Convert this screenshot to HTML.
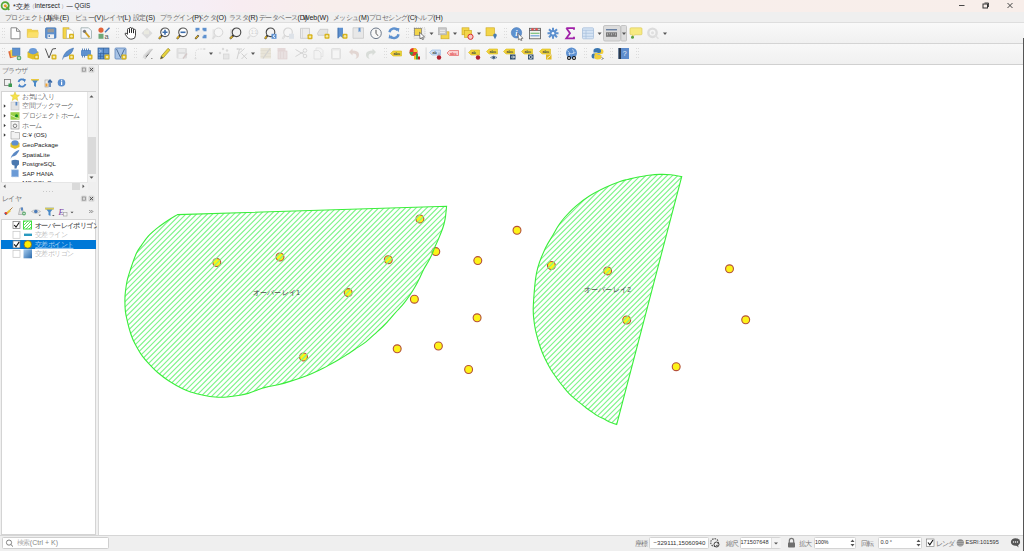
<!DOCTYPE html>
<html><head><meta charset="utf-8">
<style>
*{box-sizing:border-box}
html,body{margin:0;padding:0}
body{width:1024px;height:551px;position:relative;overflow:hidden;background:#f0f0f0;font-family:"Liberation Sans",sans-serif;font-size:8px;color:#222}
.a{position:absolute}
#title{left:0;top:0;width:1024px;height:12px;background:linear-gradient(90deg,#f1f2f7 0px,#f2f2f7 110px,#f6eef5 200px,#f8ecf1 240px,#f8eeec 320px,#f8eeea 1024px)}
#menu{left:0;top:12px;width:1024px;height:10px;background:#efefef}
#tb1{left:0;top:22px;width:1024px;height:22px;background:linear-gradient(#f9f9f9,#f0f0f0);border-top:1px solid #dedede;border-bottom:1px solid #d4d4d4}
#tb2{left:0;top:44px;width:1024px;height:21px;background:linear-gradient(#f8f8f8,#f0f0f0);border-bottom:1px solid #cdcdcd}
#left{left:0;top:65px;width:98px;height:470px;background:#f0f0f0}
#canvas{left:98px;top:64px;width:925px;height:471px;background:#fff;border-left:1px solid #d8d8d8;border-top:1px solid #d0d0d0}
#rbar{left:1023px;top:38px;width:1px;height:513px;background:#555}
#status{left:0;top:535px;width:1023px;height:16px;background:#efefef;border-top:1px solid #d6d6d6}
.txt{white-space:nowrap;line-height:1}
.j{font-size:6.6px;letter-spacing:-0.6px}
span.j{opacity:.65}
tspan.j{fill-opacity:.65}
.mn{top:14px;font-size:7px;color:#222}
</style></head><body>

<div id="title" class="a"></div>
<div id="menu" class="a"></div>
<div id="tb1" class="a"></div>
<div id="tb2" class="a"></div>
<div id="left" class="a"></div>
<div id="canvas" class="a"></div>
<svg class="a" style="left:99px;top:65px" width="924" height="470" viewBox="99 65 924 470">
<defs><pattern id="h" patternUnits="userSpaceOnUse" x="0" y="0" width="16" height="16">
<path d="M-1,6.333 L6.333,-1 M-1,11.667 L11.667,-1 M-1,17 L17,-1 M4.333,17 L17,4.333 M9.667,17 L17,9.667 M15,17 L17,15 M-1,1 L1,-1" stroke="#80f48a" stroke-width="1.15"/></pattern></defs>
<g fill="#fdf318" stroke="#b4503c" stroke-width="1.1"><circle cx="216.8" cy="262.5" r="3.95"/><circle cx="280.0" cy="257.0" r="3.95"/><circle cx="348.2" cy="292.6" r="3.95"/><circle cx="388.3" cy="259.7" r="3.95"/><circle cx="419.9" cy="219.0" r="3.95"/><circle cx="435.8" cy="251.6" r="3.95"/><circle cx="414.4" cy="299.2" r="3.95"/><circle cx="303.5" cy="357.0" r="3.95"/><circle cx="397.2" cy="348.8" r="3.95"/><circle cx="438.4" cy="346.0" r="3.95"/><circle cx="468.6" cy="369.5" r="3.95"/><circle cx="477.8" cy="260.6" r="3.95"/><circle cx="477.1" cy="317.8" r="3.95"/><circle cx="517.0" cy="230.3" r="3.95"/><circle cx="551.4" cy="265.5" r="3.95"/><circle cx="607.6" cy="270.9" r="3.95"/><circle cx="626.7" cy="320.0" r="3.95"/><circle cx="676.2" cy="366.7" r="3.95"/><circle cx="729.5" cy="268.8" r="3.95"/><circle cx="745.7" cy="319.8" r="3.95"/></g>
<g fill="url(#h)" stroke="#3aee3a" stroke-width="1.1"><path d="M177.5,214.6 L446.6,206.3 C446.4,208.0 445.9,213.8 445.5,216.7 C445.1,219.6 444.6,221.7 444.0,224.0 C443.4,226.3 442.9,227.9 441.9,230.5 C440.9,233.1 439.4,236.8 438.2,239.6 C437.0,242.4 435.9,244.8 434.8,247.3 C433.8,249.8 433.0,252.1 431.9,254.5 C430.8,256.9 429.5,259.4 428.2,261.8 C426.9,264.2 425.5,266.0 423.9,269.0 C422.3,272.0 420.3,276.8 418.8,279.8 C417.3,282.9 416.3,284.7 414.8,287.3 C413.3,289.9 411.6,292.6 409.8,295.2 C408.0,297.8 406.1,300.6 404.0,303.2 C401.9,305.8 399.8,307.8 397.4,310.5 C395.0,313.2 391.6,317.1 389.4,319.6 C387.1,322.1 386.0,323.4 383.9,325.5 C381.8,327.6 379.8,329.4 376.8,332.1 C373.8,334.8 369.5,339.0 365.9,341.9 C362.3,344.8 358.4,346.9 355.0,349.2 C351.6,351.5 348.2,353.8 345.4,355.6 C342.6,357.4 340.5,358.6 338.1,360.0 C335.7,361.4 333.3,362.7 330.9,364.0 C328.5,365.3 326.8,366.4 323.6,368.0 C320.5,369.6 315.6,371.9 312.0,373.5 C308.4,375.1 305.5,376.2 301.8,377.5 C298.1,378.8 293.9,380.2 290.0,381.4 C286.1,382.6 281.9,383.8 278.1,384.7 C274.3,385.6 269.7,386.3 267.2,386.9 C264.7,387.4 263.6,387.8 262.9,388.0 C261.8,388.4 258.8,389.5 256.3,390.4 C253.9,391.3 250.9,392.6 248.2,393.4 C245.5,394.2 243.6,394.7 240.0,395.3 C236.4,395.9 231.1,396.7 226.9,397.0 C222.8,397.3 219.0,397.3 215.1,397.0 C211.2,396.7 207.3,396.0 203.4,395.2 C199.5,394.4 195.1,393.4 191.7,392.3 C188.2,391.2 186.5,390.7 182.7,388.8 C178.8,386.9 172.8,383.4 168.6,380.7 C164.4,378.0 161.0,375.3 157.7,372.5 C154.4,369.7 151.6,366.5 149.0,363.8 C146.4,361.1 144.4,358.8 142.4,356.1 C140.4,353.4 138.6,350.3 137.0,347.4 C135.4,344.5 133.8,341.6 132.6,338.7 C131.4,335.8 130.5,333.1 129.6,330.0 C128.7,326.9 127.8,323.2 127.1,320.1 C126.4,317.0 125.8,314.7 125.4,311.4 C125.0,308.1 124.9,303.8 124.9,300.5 C124.9,297.2 125.0,295.1 125.4,291.8 C125.8,288.5 126.3,284.5 127.1,280.9 C127.9,277.3 128.8,274.6 130.3,270.0 C131.8,265.4 134.4,257.8 136.3,253.6 C138.2,249.4 139.8,247.8 141.8,244.9 C143.8,242.0 145.6,239.0 148.3,236.1 C151.0,233.2 154.7,230.1 158.1,227.4 C161.5,224.7 165.8,221.9 169.0,219.8 C172.2,217.7 176.1,215.5 177.5,214.6 Z"/><path d="M681.7,176.6 C679.9,176.3 674.4,175.2 670.8,174.8 C667.2,174.4 663.6,174.3 660.0,174.4 C656.4,174.5 652.6,174.8 649.0,175.2 C645.4,175.6 641.8,176.3 638.2,177.0 C634.6,177.7 630.3,178.8 627.3,179.5 C624.3,180.2 623.7,180.2 620.0,181.5 C616.3,182.8 610.5,185.1 605.3,187.6 C600.1,190.1 593.9,193.2 589.0,196.3 C584.1,199.4 579.9,202.7 575.9,206.1 C571.9,209.5 567.9,213.8 565.0,217.0 C562.1,220.2 560.5,222.5 558.5,225.5 C556.5,228.5 555.0,231.6 553.0,235.0 C551.0,238.4 548.4,242.3 546.5,245.9 C544.6,249.5 543.1,253.2 541.6,256.8 C540.1,260.4 538.8,264.1 537.8,267.7 C536.8,271.3 536.2,274.1 535.6,278.6 C535.0,283.2 534.4,289.8 534.0,295.0 C533.6,300.2 533.2,305.8 533.2,310.0 C533.2,314.2 533.5,316.8 533.9,320.0 C534.2,323.2 534.7,326.1 535.3,329.1 C535.9,332.1 536.7,335.1 537.5,338.1 C538.3,341.1 539.2,344.2 540.3,347.2 C541.4,350.2 542.7,353.6 543.9,356.3 C545.1,359.0 546.3,361.3 547.5,363.6 C548.7,365.9 549.6,367.6 551.1,370.0 C552.6,372.4 554.5,375.0 556.4,377.7 C558.3,380.4 560.6,383.4 562.7,386.0 C564.8,388.6 567.0,391.4 569.1,393.6 C571.2,395.8 573.4,397.6 575.4,399.3 C577.4,401.0 579.1,402.2 580.9,403.6 C582.7,405.1 584.5,406.6 586.3,408.0 C588.1,409.4 590.0,410.5 591.8,411.8 C593.6,413.1 595.2,414.4 597.2,415.6 C599.2,416.8 601.7,417.8 603.7,418.8 C605.7,419.8 606.8,420.8 609.0,421.7 C611.2,422.6 615.4,424.0 616.7,424.5 Z"/></g>
<g font-size="6.6" fill="#444" font-family="Liberation Sans" letter-spacing="0.3"><text x="252.5" y="295">オーバーレイ1</text><text x="583.5" y="291.5">オーバーレイ2</text></g>
</svg>
<div id="status" class="a"></div>
<svg class="a" style="left:0;top:23px" width="1024" height="42" viewBox="0 23 1024 42">
<rect x="603.5" y="25.5" width="17" height="15.5" rx="1.5" fill="#dcdcdc" stroke="#c4c4c4"/><rect x="621" y="25.5" width="5.5" height="15.5" rx="1" fill="#dcdcdc" stroke="#c4c4c4"/>
<g fill="#dcdcdc"><rect x="2" y="28" width="1" height="1"/><rect x="2" y="31" width="1" height="1"/><rect x="2" y="34" width="1" height="1"/><rect x="2" y="37" width="1" height="1"/><rect x="4" y="28" width="1" height="1"/><rect x="4" y="31" width="1" height="1"/><rect x="4" y="34" width="1" height="1"/><rect x="4" y="37" width="1" height="1"/></g>
<g transform="translate(10.5,27.3)"><path d="M0.5,0.5 H6 L9.5,4 V11.5 H0.5Z" fill="#fff" stroke="#8a8a8a"/><path d="M6,0.5 V4 H9.5" fill="none" stroke="#8a8a8a"/></g>
<g transform="translate(26.8,27.3)"><path d="M0.5,2 H4.5 L5.5,3 H11 V10 H0.5Z" fill="#f3d54a" stroke="#e0b83a" stroke-width=".6"/><path d="M0.5,10 L1.8,5 H12 L11,10Z" fill="#fbe06a"/></g>
<g transform="translate(45,27.3)"><rect x="0.5" y="0.5" width="10.5" height="10.5" rx="1" fill="#5e91cf" stroke="#3b6cab" stroke-width=".6"/><rect x="2.5" y="1.5" width="6.5" height="3.5" fill="#9a9a9a"/><rect x="2.5" y="7" width="6.5" height="4" fill="#f2f2f2"/><rect x="3.5" y="8" width="1.5" height="1.5" fill="#3b6cab"/></g>
<g transform="translate(62.5,27.3)"><rect x="0.5" y="0.5" width="6" height="10.5" fill="#f3d54a" stroke="#c9a51c" stroke-width=".6"/><path d="M4,2 H8.5 L11,4.5 V11 H4Z" fill="#fff" stroke="#aaa" stroke-width=".6"/><rect x="6.5" y="6.5" width="5" height="5" rx="1" fill="#d8b41e"/><circle cx="9.0" cy="9.0" r="1.3" fill="#f6eaa0"/></g>
<g transform="translate(80.5,27.3)"><path d="M0.5,0.5 H8 L11,3.5 V11 H0.5Z" fill="#f4f6fb" stroke="#9aa" stroke-width=".8"/><path d="M4,4 L9,10" stroke="#d0a020" stroke-width="1.8"/><circle cx="4" cy="4" r="1.6" fill="#777"/></g>
<g transform="translate(98,27.3)"><circle cx="3" cy="2.8" r="2.6" fill="#e2643a"/><rect x="0.5" y="6.5" width="5" height="5" fill="#6ea87a"/><path d="M7,5 L11.5,0.5" stroke="#4a78b8" stroke-width="1.4"/><text x="6.6" y="11.8" font-size="7.5" fill="#555" font-family="Liberation Sans">a</text></g>
<g fill="#dcdcdc"><rect x="116" y="28" width="1" height="1"/><rect x="116" y="31" width="1" height="1"/><rect x="116" y="34" width="1" height="1"/><rect x="116" y="37" width="1" height="1"/><rect x="118" y="28" width="1" height="1"/><rect x="118" y="31" width="1" height="1"/><rect x="118" y="34" width="1" height="1"/><rect x="118" y="37" width="1" height="1"/></g>
<g transform="translate(124.5,27.3)"><path d="M3,7 V2.2 Q3,1.2 4,1.2 Q5,1.2 5,2.2 V5.5 V1.2 Q5,0.2 6,0.2 Q7,0.2 7,1.2 V5.5 V1.8 Q7,0.8 8,0.8 Q9,0.8 9,1.8 V5.8 V3 Q9,2 10,2 Q11,2 11,3 V8 Q11,11.8 7.5,11.8 H6 Q4,11.8 2.5,9.5 L0.6,6.8 Q0.4,5.6 1.6,5.8 Z" fill="#fff" stroke="#222" stroke-width=".85" stroke-linejoin="round"/></g>
<g transform="translate(141,27.3)"><path d="M6,0.5 L11.5,6 L6,11.5 L0.5,6Z" fill="#dcdcdc"/><rect x="3" y="3" width="5" height="4" fill="#e9e9e0"/></g>
<g transform="translate(158,27.3)"><circle cx="7" cy="5" r="4.3" fill="#fff" stroke="#555" stroke-width="1.1"/><path d="M3.99,8.01 L1,11.5" stroke="#333" stroke-width="2"/><path d="M2.99,9.01 L1.2,11.2" stroke="#e0b020" stroke-width="1.6"/><path d="M4.5,5 H9.5 M7,2.5 V7.5" stroke="#3b6cab" stroke-width="1.6"/></g>
<g transform="translate(176,27.3)"><circle cx="7" cy="5" r="4.3" fill="#fff" stroke="#555" stroke-width="1.1"/><path d="M3.99,8.01 L1,11.5" stroke="#333" stroke-width="2"/><path d="M2.99,9.01 L1.2,11.2" stroke="#e0b020" stroke-width="1.6"/><path d="M4.5,5 H9.5" stroke="#3b6cab" stroke-width="1.6"/></g>
<g transform="translate(194.5,27.3)"><rect x="1" y="0.5" width="4" height="3.5" fill="#5e91cf"/><rect x="8" y="0.5" width="4" height="3.5" fill="#5e91cf"/><rect x="8" y="7.5" width="4" height="3.5" fill="#5e91cf"/><rect x="3" y="3" width="6" height="6" fill="#eee"/><path d="M4,8 L0.8,11.5" stroke="#333" stroke-width="1.8"/><path d="M3.5,8.5 L1,11.2" stroke="#e0b020" stroke-width="1.2"/></g>
<g transform="translate(211.5,27.3)"><rect x="1" y="2" width="4" height="8" fill="#e6e6e6"/><circle cx="7" cy="5" r="4.3" fill="#f6f6f6" stroke="#d6d6d6"/><path d="M3.5,8.5 L1,11.5" stroke="#dcdcdc" stroke-width="1.8"/></g>
<g transform="translate(229,27.3)"><rect x="1" y="2" width="4" height="8" fill="#e0e0e0"/><circle cx="7.5" cy="5" r="4.3" fill="#f2f2f2" stroke="#444" stroke-width="1.1"/><path d="M4.49,8.01 L1,11.5" stroke="#333" stroke-width="2"/><path d="M3.49,9.01 L1.2,11.2" stroke="#e0b020" stroke-width="1.6"/></g>
<g transform="translate(246.5,27.3)"><circle cx="7" cy="5" r="4.3" fill="#f7f7f7" stroke="#dadada"/><text x="4.5" y="7" font-size="4.5" fill="#ccc" font-family="Liberation Sans">1:1</text><path d="M3.5,8.5 L1,11.5" stroke="#dcdcdc" stroke-width="1.8"/></g>
<g transform="translate(264,27.3)"><circle cx="6.5" cy="5" r="4.3" fill="#f3f3f3" stroke="#444" stroke-width="1.1"/><path d="M3.49,8.01 L1,11.5" stroke="#333" stroke-width="2"/><path d="M2.49,9.01 L1.2,11.2" stroke="#e0b020" stroke-width="1.6"/><rect x="7.5" y="6.5" width="5" height="5" fill="#5e91cf"/><path d="M11,7.5 L9,9 L11,10.5" stroke="#fff" fill="none" stroke-width=".9"/></g>
<g transform="translate(281.5,27.3)"><circle cx="6.5" cy="5" r="4.3" fill="#f6f6f6" stroke="#d4d4d4" stroke-width="1.1"/><path d="M3.49,8.01 L1,11.5" stroke="#d8d8d8" stroke-width="2"/><path d="M2.49,9.01 L1.2,11.2" stroke="#e4e4e4" stroke-width="1.6"/><rect x="7.5" y="6.5" width="5" height="5" fill="#dde2e8"/></g>
<g transform="translate(300,27.3)"><path d="M0.5,1 H9.5 V11 H0.5Z" fill="#ececec" stroke="#c6c6c6" stroke-width=".8"/><path d="M2.5,1 V11" stroke="#d0d0d0" stroke-width=".6"/><rect x="7.5" y="7" width="5" height="5" rx="1" fill="#d8b41e"/><circle cx="10.0" cy="9.5" r="1.3" fill="#f6eaa0"/></g>
<g transform="translate(317,27.3)"><path d="M0.5,6 L3,2 H11 L10,8 H1Z" fill="#e3e3e3" stroke="#c4c4c4" stroke-width=".7"/><rect x="7.5" y="6.5" width="5" height="5" rx="1" fill="#d8b41e"/><circle cx="10.0" cy="9.0" r="1.3" fill="#f6eaa0"/></g>
<g transform="translate(337,27.3)"><path d="M1,0.5 H6 V11 L3.5,9 L1,11Z" fill="#5e91cf"/><path d="M1,0.5 V11" stroke="#3b6cab"/><rect x="5.5" y="6.5" width="5" height="5" rx="1" fill="#d8b41e"/><circle cx="8.0" cy="9.0" r="1.3" fill="#f6eaa0"/></g>
<g transform="translate(352.5,27.3)"><path d="M0.5,0.5 H11 V11 H0.5Z" fill="#e8e8e8" stroke="#c4c4c4" stroke-width=".7"/><path d="M6,0.5 H8 V5 L7,4 L6,5Z" fill="#5e91cf"/></g>
<g transform="translate(369.5,27.3)"><circle cx="6.5" cy="6" r="5.3" fill="#f8f8f8" stroke="#6e7a8a" stroke-width="1"/><path d="M6.5,2.5 V6 L8.5,8.5" stroke="#555" fill="none" stroke-width="1"/></g>
<g transform="translate(387.5,27.3)"><path d="M2,5 A4.5,4.5 0 0 1 10,3" stroke="#5e91cf" stroke-width="2.4" fill="none"/><path d="M8,0.5 L12,1 L11,5Z" fill="#5e91cf"/><path d="M11,7 A4.5,4.5 0 0 1 3,9" stroke="#5e91cf" stroke-width="2.4" fill="none"/><path d="M5,11.5 L1,11 L2,7Z" fill="#5e91cf"/></g>
<g fill="#dcdcdc"><rect x="406" y="28" width="1" height="1"/><rect x="406" y="31" width="1" height="1"/><rect x="406" y="34" width="1" height="1"/><rect x="406" y="37" width="1" height="1"/><rect x="408" y="28" width="1" height="1"/><rect x="408" y="31" width="1" height="1"/><rect x="408" y="34" width="1" height="1"/><rect x="408" y="37" width="1" height="1"/></g>
<g transform="translate(413.5,27.3)"><rect x="0.5" y="0.5" width="11" height="10.5" fill="#eee" stroke="#bbb" stroke-dasharray="1,1" stroke-width=".7"/><rect x="1" y="1" width="7" height="7" fill="#f3d54a" stroke="#777" stroke-width=".7"/><path d="M6,5 L11,9.5 L9,10 L10,12 L8.5,12 L8,10.5 L6.5,11.5Z" fill="#fff" stroke="#333" stroke-width=".6"/></g>
<path d="M429.5,32.5 L433.5,32.5 L431.5,35.0Z" fill="#555"/>
<g transform="translate(438,27.3)"><rect x="3" y="4.5" width="8" height="7" fill="#f3d54a" stroke="#c9a51c" stroke-width=".6"/><rect x="0.5" y="0.5" width="8" height="7" fill="#c8c8c8" stroke="#aaa" stroke-width=".6"/><path d="M2,3 H7 M2,5 H7" stroke="#f4f4f4" stroke-width=".9"/></g>
<path d="M453,32.5 L457,32.5 L455,35.0Z" fill="#555"/>
<g transform="translate(461.5,27.3)"><rect x="0.5" y="0.5" width="7" height="7" fill="#f3d54a" stroke="#c9a51c" stroke-width=".6"/><rect x="3" y="3" width="7" height="7" fill="#f3d54a" stroke="#c9a51c" stroke-width=".6"/><circle cx="9" cy="9.5" r="2.6" fill="#f7c8c8" stroke="#d83030" stroke-width="1"/></g>
<path d="M477,32.5 L481,32.5 L479,35.0Z" fill="#555"/>
<g transform="translate(485.5,27.3)"><rect x="0.5" y="0.5" width="8.5" height="8" fill="#f3d54a" stroke="#c9a51c" stroke-width=".6"/><path d="M11,9 A1.8,1.8 0 1 0 8,9 L9.5,12Z" fill="#4a7bb0"/></g>
<g fill="#dcdcdc"><rect x="504" y="28" width="1" height="1"/><rect x="504" y="31" width="1" height="1"/><rect x="504" y="34" width="1" height="1"/><rect x="504" y="37" width="1" height="1"/><rect x="506" y="28" width="1" height="1"/><rect x="506" y="31" width="1" height="1"/><rect x="506" y="34" width="1" height="1"/><rect x="506" y="37" width="1" height="1"/></g>
<g transform="translate(511,27.3)"><circle cx="5.5" cy="5.5" r="5.2" fill="#5e91cf" stroke="#4a7ab8" stroke-width=".6"/><text x="4.2" y="9" font-size="8" font-style="italic" font-weight="bold" fill="#fff" font-family="Liberation Serif">i</text><path d="M7,6 L12,11 L10,11.2 L11,13 L9.6,13 L9,11.5 L7.5,12.5Z" fill="#fff" stroke="#444" stroke-width=".6"/></g>
<g transform="translate(529,27.3)"><rect x="0.5" y="1" width="11" height="10.5" fill="#f2f2f2" stroke="#555" stroke-width=".8"/><path d="M0.5,3 H11.5" stroke="#555"/><circle cx="3.5" cy="2" r="1.2" fill="#e05050"/><circle cx="7.5" cy="2" r="1.2" fill="#e05050"/><path d="M1.5,6 H10.5" stroke="#7ac07a" stroke-width="1.2"/><path d="M1.5,8.5 H10.5" stroke="#6fa0d8" stroke-width="1.2"/></g>
<g transform="translate(547,27.3)"><g stroke="#5e91cf" stroke-width="2"><path d="M6,0.5 V11.5 M0.5,6 H11.5 M2,2 L10,10 M10,2 L2,10"/></g><circle cx="6" cy="6" r="3.2" fill="#5e91cf"/><circle cx="6" cy="6" r="1.3" fill="#fff"/></g>
<g transform="translate(565.5,27.3)"><path d="M0.8,0.8 H8.5 V2.5 M0.8,0.8 L4.5,6 L0.8,11 H8.5 V9.5" fill="none" stroke="#a020a8" stroke-width="1.8"/></g>
<g transform="translate(582,27.3)"><rect x="0.5" y="0.5" width="11" height="11" rx="1" fill="#d6e4f4" stroke="#a8c0dc" stroke-width=".8"/><path d="M0.5,3 H11.5 M0.5,6 H11.5 M0.5,9 H11.5 M4,3 V11.5" stroke="#a8c0dc" stroke-width=".7"/></g>
<path d="M597.6,32.5 L601.6,32.5 L599.6,35.0Z" fill="#555"/>
<g transform="translate(605,27.3)"><path d="M1,2.5 H12" stroke="#3a5a8a" stroke-width="1"/><rect x="1" y="5" width="11" height="4.5" fill="#777"/><path d="M2.5,6 V8 M4.5,6 V7 M6.5,6 V8 M8.5,6 V7 M10.5,6 V8" stroke="#ddd" stroke-width=".6"/></g>
<path d="M622,32.5 L626,32.5 L624,35.0Z" fill="#555"/>
<g transform="translate(630,27.3)"><path d="M1,0.5 H11 Q12,0.5 12,1.5 V6.5 Q12,7.5 11,7.5 H4.5 L2.5,10 V7.5 H1 Q0,7.5 0,6.5 V1.5 Q0,0.5 1,0.5Z" fill="#f7ea82" stroke="#d9c650" stroke-width=".6"/><circle cx="2.5" cy="10" r="1.5" fill="#5aa040"/></g>
<g transform="translate(647,27.3)"><circle cx="5.5" cy="5.5" r="4.2" fill="none" stroke="#dcdcdc" stroke-width="2.4"/><circle cx="5.5" cy="5.5" r="1.5" fill="#e0e0e0"/><path d="M8,8 L11.5,11.5" stroke="#e0e0e0" stroke-width="1.6"/></g>
<path d="M663,32.5 L667,32.5 L665,35.0Z" fill="#555"/>
<g fill="#dcdcdc"><rect x="2" y="48" width="1" height="1"/><rect x="2" y="51" width="1" height="1"/><rect x="2" y="54" width="1" height="1"/><rect x="2" y="57" width="1" height="1"/><rect x="4" y="48" width="1" height="1"/><rect x="4" y="51" width="1" height="1"/><rect x="4" y="54" width="1" height="1"/><rect x="4" y="57" width="1" height="1"/></g>
<g transform="translate(9,47.5)"><rect x="0" y="3" width="7" height="7" fill="#e06a3a" transform="rotate(-15 3.5 6.5)"/><rect x="1.5" y="2" width="7" height="7" fill="#f3d54a" transform="rotate(-8 5 5.5)"/><rect x="3.5" y="0.5" width="7.5" height="7.5" fill="#5e91cf" stroke="#4a7ab0" stroke-width=".5"/><circle cx="10" cy="10.5" r="2.3" fill="#3d9a55"/><path d="M10,9 V12 M8.5,10.5 H11.5" stroke="#fff" stroke-width=".8"/></g>
<g transform="translate(27,47.5)"><path d="M0.5,4.5 L6,2 L11.5,4.5 V10 L6,12 L0.5,10Z" fill="#e3c227"/><path d="M0.5,4.5 L6,2 L11.5,4.5 L6,7Z" fill="#5e91cf"/><ellipse cx="6" cy="3.5" rx="4" ry="3" fill="#6b9bd6"/><rect x="7" y="7" width="5" height="5" rx="1" fill="#d8b41e"/><circle cx="9.5" cy="9.5" r="1.3" fill="#f6eaa0"/></g>
<g transform="translate(44.5,47.5)"><path d="M0.8,1 L4.5,10.5 L8,1.5 L11.5,1" fill="none" stroke="#555" stroke-width="1"/><rect x="7" y="7" width="5" height="5" rx="1" fill="#d8b41e"/><circle cx="9.5" cy="9.5" r="1.3" fill="#f6eaa0"/></g>
<g transform="translate(62,47.5)"><path d="M0.5,12 Q2,3 11.5,0.5 Q10,8 2,9.5" fill="#5e91cf" stroke="#3b6cab" stroke-width=".6"/><rect x="7" y="7" width="5" height="5" rx="1" fill="#d8b41e"/><circle cx="9.5" cy="9.5" r="1.3" fill="#f6eaa0"/></g>
<g transform="translate(80.5,47.5)"><rect x="0.5" y="2.5" width="10" height="6" rx="1" fill="#5e91cf"/><path d="M2,1 V3 M4,1 V3 M6,1 V3 M8,1 V3 M2,8 V10 M4,8 V10" stroke="#3b6cab" stroke-width=".8"/><rect x="7" y="7" width="5" height="5" rx="1" fill="#d8b41e"/><circle cx="9.5" cy="9.5" r="1.3" fill="#f6eaa0"/></g>
<g transform="translate(97.5,47.5)"><rect x="0.5" y="0.5" width="11" height="11" fill="#5e91cf" stroke="#2f5d96" stroke-width=".7"/><path d="M0.5,6 H11.5 M6,0.5 V11.5 M3,6 V11.5 M0.5,8.8 H6" stroke="#2f5d96" stroke-width=".6"/><path d="M1.5,2 L4,3.5 L1.5,5" stroke="#c8dcf2" fill="none" stroke-width=".6"/><rect x="7" y="7" width="5" height="5" rx="1" fill="#d8b41e"/><circle cx="9.5" cy="9.5" r="1.3" fill="#f6eaa0"/></g>
<g transform="translate(114.5,47.5)"><rect x="0.5" y="0.5" width="11" height="11" rx="1" fill="#a9c4e6" stroke="#5e86bb" stroke-width=".8"/><path d="M2,1.5 L6,10 L10,1.5" stroke="#4f6f98" fill="none" stroke-width="1"/><rect x="7" y="7" width="5" height="5" rx="1" fill="#d8b41e"/><circle cx="9.5" cy="9.5" r="1.3" fill="#f6eaa0"/></g>
<g fill="#dcdcdc"><rect x="134" y="48" width="1" height="1"/><rect x="134" y="51" width="1" height="1"/><rect x="134" y="54" width="1" height="1"/><rect x="134" y="57" width="1" height="1"/><rect x="136" y="48" width="1" height="1"/><rect x="136" y="51" width="1" height="1"/><rect x="136" y="54" width="1" height="1"/><rect x="136" y="57" width="1" height="1"/></g>
<g transform="translate(141.5,47.5)"><path d="M1,11 L2,7.5 L8.5,1 L10.5,3 L4,9.5Z" fill="#dcdcdc"/><path d="M3.5,11.5 L4.5,8 L11,1.5" stroke="#cfcfcf" stroke-width="1.5"/><rect x="9.5" y="10.5" width="1.5" height="1" fill="#999"/></g>
<g transform="translate(159.5,47.5)"><path d="M1,11.5 L1.8,8.5 L8.5,0.8 L10.6,2.6 L3.8,10.3Z" fill="#e6d23a" stroke="#8a7a20" stroke-width=".6"/><path d="M1,11.5 L1.8,8.5 L3.8,10.3Z" fill="#555"/></g>
<g transform="translate(176,47.5)"><rect x="0.5" y="0.5" width="10.5" height="10.5" rx="1" fill="#dedede"/><rect x="2.5" y="1.5" width="6.5" height="3" fill="#eaeaea"/><rect x="2.5" y="6.5" width="6" height="4" fill="#f0f0f0"/><path d="M7,11 L11,6" stroke="#d4c8c8" stroke-width="1.4"/></g>
<g transform="translate(194,47.5)"><path d="M1.5,11 V5 Q2,1.5 6,1.5 H10.5" fill="none" stroke="#d8d8d8" stroke-width=".9" stroke-dasharray="1.5,1"/><circle cx="10.5" cy="1.5" r="1" fill="#ddd"/><circle cx="1.5" cy="11" r="1" fill="#ddd"/></g>
<path d="M209,52.5 L213,52.5 L211,55.0Z" fill="#555"/>
<g transform="translate(218,47.5)"><circle cx="2" cy="5.5" r="1.2" fill="#dadada"/><circle cx="5" cy="1.5" r="1.2" fill="#dadada"/><circle cx="9" cy="3" r="1.2" fill="#dadada"/><rect x="5.5" y="6.5" width="5.5" height="5" fill="#e6e6e6" stroke="#d0d0d0" stroke-width=".6"/></g>
<g transform="translate(236,47.5)"><path d="M1,11.5 L3.5,1.5 M1.5,1.5 H6 M3,6 L8.5,1 M5.5,6 L11,11.5 M11,6 L5.5,11.5" stroke="#d0d0d0" stroke-width="1" fill="none"/><circle cx="1.5" cy="1.5" r="1" fill="#d8d8d8"/></g>
<path d="M251,52.5 L255,52.5 L253,55.0Z" fill="#555"/>
<g transform="translate(260,47.5)"><rect x="0.5" y="0.5" width="10.5" height="10.5" fill="#e8e4d8"/><path d="M3,11 L10,1" stroke="#d0d0d0" stroke-width="1.2"/><path d="M0.5,3 H11 M0.5,6 H11 M0.5,9 H11" stroke="#ddd8cc" stroke-width=".5"/></g>
<g transform="translate(276.5,47.5)"><rect x="1" y="0.5" width="8" height="3" fill="#e4d8d8"/><rect x="1.5" y="3.5" width="9" height="8" fill="#e8e0e0" stroke="#dccccc" stroke-width=".6"/><path d="M4,4 V11 M7,4 V11" stroke="#dcd0d0" stroke-width=".5"/></g>
<g transform="translate(295,47.5)"><path d="M0.5,2 L9,7 M0.5,9 L9,4" stroke="#d4d4d4" stroke-width="1"/><circle cx="10" cy="3" r="1.8" fill="none" stroke="#d4d4d4" stroke-width=".9"/><circle cx="10" cy="8.5" r="1.8" fill="none" stroke="#d4d4d4" stroke-width=".9"/></g>
<g transform="translate(313.5,47.5)"><path d="M2.5,0.5 H7 L9.5,3 V9 H2.5Z" fill="#f3f3f3" stroke="#dedede" stroke-width=".7"/><path d="M0.5,3 H5 L7.5,5.5 V11.5 H0.5Z" fill="#f3f3f3" stroke="#dadada" stroke-width=".7"/></g>
<g transform="translate(331,47.5)"><rect x="0.5" y="1" width="9" height="10.5" rx="1" fill="#e8e8e8" stroke="#dadada" stroke-width=".7"/><rect x="2" y="3" width="6" height="7.5" fill="#f5f5f5"/></g>
<g transform="translate(348.5,47.5)"><path d="M4,1 L0.5,4.5 L4,8 V6 Q8,5.5 8,9 Q8,11 6,11.5 Q11,11 10.5,6.5 Q10,3 4,3Z" fill="#e2d6d2"/></g>
<g transform="translate(365.5,47.5)"><path d="M7,1 L10.5,4.5 L7,8 V6 Q3,5.5 3,9 Q3,11 5,11.5 Q0,11 0.5,6.5 Q1,3 7,3Z" fill="#d8dcd8"/></g>
<g fill="#dcdcdc"><rect x="384" y="48" width="1" height="1"/><rect x="384" y="51" width="1" height="1"/><rect x="384" y="54" width="1" height="1"/><rect x="384" y="57" width="1" height="1"/><rect x="386" y="48" width="1" height="1"/><rect x="386" y="51" width="1" height="1"/><rect x="386" y="54" width="1" height="1"/><rect x="386" y="57" width="1" height="1"/></g>
<g transform="translate(390.5,47.5)"><path d="M2.5,3.5 H11 V8.5 H2.5 L0,6.0Z" fill="#f0d43a" stroke="#d8b81c" stroke-width=".6"/><text x="3" y="7.7" font-size="3.8" fill="#444" font-family="Liberation Sans" font-weight="bold">abc</text></g>
<g transform="translate(409,47.5)"><circle cx="4.5" cy="4.5" r="4" fill="#e03a2a"/><path d="M4.5,4.5 V0.5 A4,4 0 0 1 8.5,4.5Z" fill="#f0d030"/><path d="M4.5,4.5 L0.5,4.5 A4,4 0 0 0 3,8.2Z" fill="#40a040"/><rect x="5" y="8" width="2" height="4" fill="#f0c020"/><rect x="7" y="6" width="2" height="6" fill="#40a040"/><rect x="9" y="9" width="2" height="3" fill="#c02020"/></g>
<rect x="425.6" y="47.5" width="1" height="12" fill="#d8d8d8"/>
<g transform="translate(429.5,47.5)"><path d="M2.5,2.5 H11 V7.5 H2.5 L0,5.0Z" fill="#cfe0f6" stroke="#8db2e0" stroke-width=".6"/><text x="3" y="6.7" font-size="3.8" fill="#444" font-family="Liberation Sans" font-weight="bold">ab</text><circle cx="9.5" cy="10" r="2.2" fill="#b02030"/><path d="M9.5,5 V8" stroke="#888" stroke-width=".6"/></g>
<g transform="translate(447,47.5)"><path d="M2.5,3 H11.5 V8 H2.5 L0,5.5Z" fill="#fbd0d0" stroke="#e04a4a" stroke-width=".6"/><text x="3" y="7.2" font-size="3.8" fill="#e04a4a" font-family="Liberation Sans" font-weight="bold">abc</text></g>
<rect x="464.5" y="47.5" width="1" height="12" fill="#d8d8d8"/>
<g transform="translate(468.5,47.5)"><path d="M2.5,2.5 H11 V7.5 H2.5 L0,5.0Z" fill="#f0d43a" stroke="#d8b81c" stroke-width=".6"/><text x="3" y="6.7" font-size="3.8" fill="#444" font-family="Liberation Sans" font-weight="bold">ab</text><circle cx="9.5" cy="10" r="2.2" fill="#b02030"/></g>
<g transform="translate(486.5,47.5)"><path d="M2.5,1.5 H11 V6.5 H2.5 L0,4.0Z" fill="#f0d43a" stroke="#d8b81c" stroke-width=".6"/><text x="3" y="5.7" font-size="3.8" fill="#444" font-family="Liberation Sans" font-weight="bold">abc</text><path d="M4,10 Q7,7 10.5,10 Q7,13 4,10Z" fill="#fff" stroke="#3a5a80" stroke-width=".6"/><circle cx="7.2" cy="10" r="1.3" fill="#2a4a70"/></g>
<g transform="translate(503.5,47.5)"><path d="M2.5,1.5 H11 V6.5 H2.5 L0,4.0Z" fill="#f0d43a" stroke="#d8b81c" stroke-width=".6"/><text x="3" y="5.7" font-size="3.8" fill="#444" font-family="Liberation Sans" font-weight="bold">abc</text><rect x="6.5" y="7" width="5.5" height="5" fill="#2d4d6e"/><path d="M7.5,9.5 H11 M9.5,8 L11,9.5 L9.5,11" stroke="#fff" stroke-width=".8" fill="none"/></g>
<g transform="translate(521.5,47.5)"><path d="M2.5,1.5 H11 V6.5 H2.5 L0,4.0Z" fill="#f0d43a" stroke="#d8b81c" stroke-width=".6"/><text x="3" y="5.7" font-size="3.8" fill="#444" font-family="Liberation Sans" font-weight="bold">abc</text><rect x="6.5" y="7" width="5.5" height="5" fill="#2d4d6e"/><circle cx="9.2" cy="9.5" r="1.5" fill="none" stroke="#fff" stroke-width=".7"/></g>
<g transform="translate(539.5,47.5)"><path d="M2.5,1.5 H11 V6.5 H2.5 L0,4.0Z" fill="#f0d43a" stroke="#d8b81c" stroke-width=".6"/><text x="3" y="5.7" font-size="3.8" fill="#444" font-family="Liberation Sans" font-weight="bold">abc</text><rect x="6.5" y="7" width="5.5" height="5" fill="#e0b820"/><path d="M7.5,11 L11,8" stroke="#fff" stroke-width=".8"/></g>
<g fill="#dcdcdc"><rect x="558" y="48" width="1" height="1"/><rect x="558" y="51" width="1" height="1"/><rect x="558" y="54" width="1" height="1"/><rect x="558" y="57" width="1" height="1"/><rect x="560" y="48" width="1" height="1"/><rect x="560" y="51" width="1" height="1"/><rect x="560" y="54" width="1" height="1"/><rect x="560" y="57" width="1" height="1"/></g>
<g transform="translate(565.5,47.5)"><circle cx="6" cy="5.5" r="5.5" fill="#5c8fd0"/><path d="M2,3 Q5,5 4,8 M7,1.5 Q9,4 8,6 M3,6 Q6,7 10,5" stroke="#d8e6f6" stroke-width=".7" fill="none"/><circle cx="3.5" cy="10.5" r="2" fill="#111"/><circle cx="8.5" cy="10.5" r="2" fill="#111"/><circle cx="3.5" cy="10.5" r="1" fill="#ddd"/><circle cx="8.5" cy="10.5" r="1" fill="#ddd"/></g>
<g fill="#dcdcdc"><rect x="584" y="48" width="1" height="1"/><rect x="584" y="51" width="1" height="1"/><rect x="584" y="54" width="1" height="1"/><rect x="584" y="57" width="1" height="1"/><rect x="586" y="48" width="1" height="1"/><rect x="586" y="51" width="1" height="1"/><rect x="586" y="54" width="1" height="1"/><rect x="586" y="57" width="1" height="1"/></g>
<g transform="translate(591.5,47.5)"><path d="M6,0.5 Q2,0.5 2,3 V5 H6 V6 H2 Q0,6 0,8.5 Q0,11 2,11 H3 V8.5 Q3,7 5,7 H8 Q9.5,7 9.5,5.5 V3 Q9.5,0.5 6,0.5Z" fill="#3a76b0"/><path d="M6,12 Q10,12 10,9.5 V7.5 H6 V6.5 H10 Q12,6.5 12,4 Q12,1.5 10,1.5 H9.5 V4 Q9.5,5.5 7.5,5.5 H4 Q3,5.5 3,7 V9.5 Q3,12 6,12Z" fill="#f2cf3a"/><path d="M10,10 L12,11 L10,12" stroke="#555" stroke-width=".6" fill="none"/></g>
<g fill="#dcdcdc"><rect x="610" y="48" width="1" height="1"/><rect x="610" y="51" width="1" height="1"/><rect x="610" y="54" width="1" height="1"/><rect x="610" y="57" width="1" height="1"/><rect x="612" y="48" width="1" height="1"/><rect x="612" y="51" width="1" height="1"/><rect x="612" y="54" width="1" height="1"/><rect x="612" y="57" width="1" height="1"/></g>
<g transform="translate(618,47.5)"><rect x="0.5" y="0.5" width="10.5" height="11" fill="#5d8ccc"/><rect x="0.5" y="0.5" width="2.5" height="11" fill="#2a3a4e"/><text x="4.8" y="8.5" font-size="7" fill="#e8f0fa" font-family="Liberation Sans">?</text></g>
<g fill="#dcdcdc"><rect x="636" y="48" width="1" height="1"/><rect x="636" y="51" width="1" height="1"/><rect x="636" y="54" width="1" height="1"/><rect x="636" y="57" width="1" height="1"/><rect x="638" y="48" width="1" height="1"/><rect x="638" y="51" width="1" height="1"/><rect x="638" y="54" width="1" height="1"/><rect x="638" y="57" width="1" height="1"/></g>
</svg>
<svg class="a" style="left:0;top:0" width="14" height="12"><circle cx="5.2" cy="5.8" r="3.6" fill="none" stroke="#58a838" stroke-width="1.8"/><path d="M6.5,7 L9.3,9.8" stroke="#58a838" stroke-width="1.8"/><circle cx="5.3" cy="5.8" r="1.6" fill="#f0c030"/><path d="M4.5,5 L6.5,7.5" stroke="#e05030" stroke-width=".8"/></svg>
<div class="a txt" style="left:13px;top:2.5px;font-size:7px;color:#1a1a1a">*</div><div class="a txt" style="left:15.5px;top:2.5px;font-size:7.2px;color:#1a1a1a;letter-spacing:0.3px">交差</div><div class="a txt" style="left:29px;top:2.5px;font-size:6px;color:#999">（</div><div class="a txt" style="left:34.8px;top:2.7px;font-size:6.6px;color:#1a1a1a">intersect</div><div class="a txt" style="left:61px;top:2.5px;font-size:6px;color:#999">）</div><div class="a txt" style="left:66.5px;top:2.7px;font-size:6.3px;color:#1a1a1a">— QGIS</div>
<svg class="a" style="left:950px;top:0" width="74" height="12"><path d="M9,5.5 H14.5" stroke="#333" stroke-width=".9"/><rect x="33" y="4" width="4.5" height="4" fill="none" stroke="#333" stroke-width="1"/><path d="M34.5,3 H38.5 V7" fill="none" stroke="#333" stroke-width=".9"/><path d="M57.5,3 L62.5,8 M62.5,3 L57.5,8" stroke="#333" stroke-width=".9"/></svg>
<div class="a txt mn" style="left:5px"><span class="j">プロジェクト</span>(J)</div>
<div class="a txt mn" style="left:47px"><span class="j">編集</span>(E)</div>
<div class="a txt mn" style="left:75px"><span class="j">ビュー</span>(V)</div>
<div class="a txt mn" style="left:103px"><span class="j">レイヤ</span>(L)</div>
<div class="a txt mn" style="left:133px"><span class="j">設定</span>(S)</div>
<div class="a txt mn" style="left:160px"><span class="j">プラグイン</span>(P)</div>
<div class="a txt mn" style="left:197px"><span class="j">ベクタ</span>(O)</div>
<div class="a txt mn" style="left:229px"><span class="j">ラスタ</span>(R)</div>
<div class="a txt mn" style="left:259px"><span class="j">データベース</span>(D)</div>
<div class="a txt mn" style="left:303px">Web(W)</div>
<div class="a txt mn" style="left:333px"><span class="j">メッシュ</span>(M)</div>
<div class="a txt mn" style="left:369px"><span class="j">プロセシング</span>(C)</div>
<div class="a txt mn" style="left:414px"><span class="j">ヘルプ</span>(H)</div>
<div class="a txt" style="left:2px;top:66.5px;font-size:7px;color:#333"><span class="j">ブラウザ</span></div>
<svg class="a" style="left:80px;top:66px" width="16" height="8"><rect x="0.8" y="0.5" width="6.2" height="6.2" rx="1.5" fill="#d9d9d9"/><rect x="2.3" y="2" width="3.2" height="3.2" fill="none" stroke="#888" stroke-width=".7"/><rect x="8.3" y="0.5" width="6.2" height="6.2" rx="1.5" fill="#d9d9d9"/><path d="M9.8,2 L13,5.2 M13,2 L9.8,5.2" stroke="#444" stroke-width=".9"/></svg>
<svg class="a" style="left:0;top:77px" width="70" height="12">
<rect x="4.5" y="2.5" width="6" height="6" fill="none" stroke="#777" stroke-width=".8"/><rect x="8.5" y="6.5" width="3.5" height="3.5" fill="#3a9a50"/>
<path d="M18.5,5 A3.5,3.5 0 0 1 24.5,3.5" stroke="#4a84c8" stroke-width="1.8" fill="none"/><path d="M23,1.5 L26,2.5 L24.5,5.5Z" fill="#4a84c8"/><path d="M25.5,7 A3.5,3.5 0 0 1 19.5,8.5" stroke="#4a84c8" stroke-width="1.8" fill="none"/><path d="M21,10.5 L18,9.5 L19.5,6.5Z" fill="#4a84c8"/>
<path d="M31,2 H39 L36,6 V10 L34,9 V6Z" fill="#4a8ac8"/><rect x="31" y="2" width="8" height="1.5" fill="#e8c840"/>
<rect x="45" y="3" width="3.5" height="7" fill="#eee" stroke="#999" stroke-width=".6"/><rect x="45.5" y="6.5" width="2" height="3" fill="#f0a030"/><path d="M50,10 V4 M48,5.5 L50,3 L52,5.5" stroke="#3a6aa8" stroke-width="1.4" fill="none"/>
<circle cx="61.5" cy="5.8" r="3.8" fill="#5c8fcf"/><rect x="61" y="4.5" width="1.2" height="3.5" fill="#fff"/><rect x="61" y="2.8" width="1.2" height="1" fill="#fff"/>
</svg>
<div class="a" style="left:0.5px;top:91px;width:95.5px;height:99px;background:#fff;border:1px solid #d4d4d4"></div>
<div class="a" style="left:87px;top:92px;width:8.5px;height:90px;background:#f2f2f2;border-left:1px solid #e6e6e6"></div>
<div class="a" style="left:88px;top:136.5px;width:7.5px;height:37.5px;background:#dadada"></div>
<div class="a" style="left:0.5px;top:182px;width:87px;height:7.5px;background:#f2f2f2;border-top:1px solid #e6e6e6"></div>
<div class="a" style="left:72px;top:183px;width:8px;height:6.5px;background:#dadada"></div>
<div class="a" style="left:87.5px;top:182px;width:8.5px;height:7.5px;background:#efefef"></div>
<svg class="a" style="left:0;top:91px" width="97" height="100">
<path d="M89.5,6.5 L91.5,4.3 L93.5,6.5Z" fill="#555"/><path d="M89.5,85.5 L91.5,87.8 L93.5,85.5Z" fill="#555"/>
<path d="M5.5,93.5 L3.5,95.3 L5.5,97.2Z" fill="#555"/><path d="M82.5,93.5 L84.5,95.3 L82.5,97.2Z" fill="#555"/>
</svg>
<svg class="a" style="left:0;top:91px" width="87" height="91"><g transform="translate(0,-91)">
<path d="M15.0,92.0 L16.3,95.0 L19.5,95.2 L17.0,97.3 L17.8,100.5 L15.0,98.8 L12.2,100.5 L13.0,97.3 L10.5,95.2 L13.7,95.0Z" fill="#f6e24a" stroke="#d8c030" stroke-width=".5"/>
<text x="22.3" y="98.8" font-size="6.2" fill="#222" font-family="Liberation Sans"><tspan class="j">お気に入り</tspan></text>
<path d="M3.8,104.2 L5.8,106 L3.8,107.8Z" fill="#333"/>
<rect x="11.0" y="102.0" width="8" height="8" fill="#e4e4e4" stroke="#c0c0c0" stroke-width=".6"/><rect x="15.5" y="102.0" width="1.8" height="3.5" fill="#5a8ac8"/>
<text x="22.3" y="108.3" font-size="6.2" fill="#222" font-family="Liberation Sans"><tspan class="j">空間ブックマーク</tspan></text>
<path d="M3.8,113.9 L5.8,115.7 L3.8,117.5Z" fill="#333"/>
<rect x="10.5" y="112.2" width="9" height="7.5" fill="#9ad048"/><path d="M10.5,115.2 L19.5,119.2" stroke="#e8f4c8" stroke-width=".8"/><circle cx="16.5" cy="115.7" r="1.5" fill="#108a20"/>
<text x="22.3" y="118.0" font-size="6.2" fill="#222" font-family="Liberation Sans"><tspan class="j">プロジェクトホーム</tspan></text>
<path d="M3.8,123.7 L5.8,125.5 L3.8,127.3Z" fill="#333"/>
<rect x="11.0" y="121.5" width="8" height="7.5" fill="#f4f4f4" stroke="#888" stroke-width=".6"/><circle cx="15.0" cy="125.8" r="1.8" fill="none" stroke="#555" stroke-width=".7"/>
<text x="22.3" y="127.8" font-size="6.2" fill="#222" font-family="Liberation Sans"><tspan class="j">ホーム</tspan></text>
<path d="M3.8,133.2 L5.8,135 L3.8,136.8Z" fill="#333"/>
<path d="M11.0,131.5 H14.0 L15.0,132.5 H19.5 V139.0 H11.0Z" fill="#f2f2f2" stroke="#999" stroke-width=".6"/>
<text x="22.3" y="137.3" font-size="6.2" fill="#222" font-family="Liberation Sans">C:¥ (OS)</text>
<path d="M10.5,143.1 L15.0,141.1 L19.5,143.1 V147.1 L15.0,149.1 L10.5,147.1Z" fill="#e2c22a"/><ellipse cx="15.0" cy="142.9" rx="3.6" ry="2.6" fill="#5e8fd0"/>
<text x="22.3" y="146.9" font-size="6.2" fill="#222" font-family="Liberation Sans">GeoPackage</text>
<path d="M10.5,158.8 Q12.5,151.8 19.5,149.8 Q17.5,155.8 12.0,156.8" fill="#5a88c4"/>
<text x="22.3" y="156.60000000000002" font-size="6.2" fill="#222" font-family="Liberation Sans">SpatiaLite</text>
<path d="M11.5,160.5 Q15.0,159.0 19.0,160.5 V164.5 Q16.5,165.5 16.5,168.5 H14.5 V165.5 Q11.5,165.5 11.5,162.5Z" fill="#4a78b0"/>
<text x="22.3" y="166.3" font-size="6.2" fill="#222" font-family="Liberation Sans">PostgreSQL</text>
<rect x="11.5" y="169.8" width="7" height="7" fill="#6a9ad6" stroke="#aac4e6" stroke-width=".8" stroke-dasharray=".8,.6"/>
<text x="22.3" y="175.60000000000002" font-size="6.2" fill="#222" font-family="Liberation Sans">SAP HANA</text>
<path d="M10.5,184.0 Q14.5,180.0 19.5,184.0Z" fill="#5080c0"/>
<text x="22.3" y="184.8" font-size="6.2" fill="#222" font-family="Liberation Sans">MS SQL Server</text>
</g></svg>
<svg class="a" style="left:43px;top:191px" width="12" height="2"><g fill="#c8c8c8"><rect x="0" y="0" width="1" height="1"/><rect x="3" y="0" width="1" height="1"/><rect x="6" y="0" width="1" height="1"/><rect x="9" y="0" width="1" height="1"/></g></svg>
<div class="a txt" style="left:2px;top:195px;font-size:7px;color:#333"><span class="j">レイヤ</span></div>
<svg class="a" style="left:80px;top:195px" width="16" height="8"><rect x="0.8" y="0.5" width="6.2" height="6.2" rx="1.5" fill="#d9d9d9"/><rect x="2.3" y="2" width="3.2" height="3.2" fill="none" stroke="#888" stroke-width=".7"/><rect x="8.3" y="0.5" width="6.2" height="6.2" rx="1.5" fill="#d9d9d9"/><path d="M9.8,2 L13,5.2 M13,2 L9.8,5.2" stroke="#444" stroke-width=".9"/></svg>
<svg class="a" style="left:0;top:205px" width="97" height="12">
<path d="M5,8.5 L9.5,4.5 L11,6 L6.5,10Z" fill="#e8c040"/><path d="M4.5,7.5 Q6,6.5 7.5,8 L6,10 Q4.5,10 4.5,7.5Z" fill="#d83a30"/><path d="M4.5,8.5 L6,10" stroke="#3a70b8" stroke-width="1"/><path d="M10,5 L12.5,2.5" stroke="#b08040" stroke-width="1"/>
<path d="M18.5,9.5 L20,3 H22.5 L23.5,9.5Z" fill="#e0e0e0" stroke="#999" stroke-width=".6"/><rect x="21" y="2.5" width="2" height="3" fill="#5a88c4"/><circle cx="24" cy="8.5" r="2" fill="#6ab07a"/><path d="M23,8.5 H25" stroke="#fff" stroke-width=".6"/>
<path d="M31.5,6.5 Q36,3 40.5,6.5 Q36,10 31.5,6.5Z" fill="#e6e6e6" stroke="#aaa" stroke-width=".6"/><circle cx="35.8" cy="6.5" r="1.8" fill="#4a7ab8"/><path d="M38.5,9.8 L39.8,11 L41,9.8Z" fill="#555"/>
<path d="M45,2.8 H54 L50.5,7 V11 L48.5,10 V7Z" fill="#4a8ac8"/><rect x="45" y="2.8" width="9" height="1.8" fill="#d8c858"/><path d="M52,10 L53.3,11.3 L54.6,10Z" fill="#555"/>
<text x="58.5" y="9.5" font-size="8.5" fill="#7a3aa0" font-family="Liberation Serif" font-style="italic">E</text><rect x="63.5" y="7.5" width="3.5" height="3.5" fill="#f4f4f4" stroke="#999" stroke-width=".6"/><path d="M70.5,6.8 L72,8.3 L73.5,6.8Z" fill="#444"/>
<path d="M89.3,5 L90.8,6.5 L89.3,8 M91.3,5 L92.8,6.5 L91.3,8" stroke="#555" stroke-width=".7" fill="none"/>
</svg>
<div class="a" style="left:0.5px;top:219px;width:95.5px;height:316px;background:#fff;border:1px solid #d4d4d4"></div>
<div class="a" style="left:1px;top:239.8px;width:94.7px;height:9.2px;background:#0078d7"></div>
<svg class="a" style="left:0;top:219px" width="97" height="45"><defs><pattern id="lh" patternUnits="userSpaceOnUse" width="3" height="3"><path d="M0,3 L3,0" stroke="#60e060" stroke-width="1"/></pattern><linearGradient id="lg" x1="0" y1="0" x2="1" y2="1"><stop offset="0" stop-color="#a8cdef"/><stop offset="1" stop-color="#2a6aac"/></linearGradient></defs><g transform="translate(0,-219)">
<rect x="13" y="221.5" width="7" height="7" fill="#fff" stroke="#777" stroke-width=".7"/>
<path d="M14.2,225 L16,227.2 L19.2,222.5" stroke="#111" stroke-width="1.1" fill="none"/>
<rect x="23.5" y="221" width="8" height="8" fill="url(#lh)" stroke="#40e040" stroke-width="1"/>
<text x="35" y="227.5" font-size="7" fill="#111" font-weight="bold" font-family="Liberation Sans"><tspan class="j">オーバーレイポリゴン</tspan></text>
<rect x="13" y="231.3" width="7" height="7" fill="#fff" stroke="#c4c4c4" stroke-width=".7"/>
<rect x="24" y="233.60000000000002" width="8" height="2.4" fill="#2a9ac0"/>
<text x="35" y="237.3" font-size="7" fill="#999" font-weight="normal" font-family="Liberation Sans"><tspan class="j">交差ライン</tspan></text>
<rect x="13" y="240.9" width="7" height="7" fill="#fff" stroke="#777" stroke-width=".7"/>
<path d="M14.2,244.4 L16,246.6 L19.2,241.9" stroke="#111" stroke-width="1.1" fill="none"/>
<circle cx="27.8" cy="244.4" r="3.8" fill="#ffee00" stroke="#7a5a30" stroke-width=".8"/>
<text x="35" y="246.9" font-size="7" fill="#fff" font-weight="normal" font-family="Liberation Sans" text-decoration="underline"><tspan class="j">交差ポイント</tspan></text>
<rect x="13" y="250.3" width="7" height="7" fill="#fff" stroke="#c4c4c4" stroke-width=".7"/>
<rect x="23.5" y="249.3" width="8.5" height="9" fill="url(#lg)"/>
<text x="35" y="256.3" font-size="7" fill="#999" font-weight="normal" font-family="Liberation Sans"><tspan class="j">交差ポリゴン</tspan></text>
</g></svg>
<div class="a" style="left:2px;top:537px;width:106.5px;height:11.5px;background:#fff;border:1px solid #cfcfcf;border-radius:1.5px"></div>
<svg class="a" style="left:5px;top:539px" width="10" height="9"><circle cx="4" cy="3.6" r="2.6" fill="none" stroke="#666" stroke-width=".8"/><path d="M5.9,5.5 L8,7.6" stroke="#666" stroke-width=".9"/></svg>
<div class="a txt" style="left:17px;top:539px;font-size:7px;color:#888"><span class="j">検索</span>(Ctrl + K)</div>
<div class="a txt" style="left:635px;top:539.5px;font-size:7px;color:#333"><span class="j">座標</span></div>
<div class="a" style="left:648.5px;top:537px;width:60px;height:11.5px;background:#fff;border:1px solid #d4d4d4;border-radius:1.5px"></div>
<div class="a txt" style="left:653.5px;top:540px;font-size:6.1px;color:#333">−329111,15060940</div>
<svg class="a" style="left:710px;top:537px" width="11" height="12"><circle cx="4.5" cy="5.5" r="3.8" fill="none" stroke="#555" stroke-width="1.2" stroke-dasharray="1.5,1"/><circle cx="6.5" cy="7.5" r="2.5" fill="none" stroke="#444" stroke-width="1"/></svg>
<div class="a txt" style="left:726px;top:539.5px;font-size:7px;color:#333"><span class="j">縮尺</span></div>
<div class="a" style="left:739.5px;top:537px;width:41.5px;height:11.5px;background:#fff;border:1px solid #d4d4d4;border-radius:1.5px"></div>
<div class="a" style="left:771px;top:538px;width:9.5px;height:9.5px;background:#f4f4f4;border-left:1px solid #e0e0e0"></div>
<svg class="a" style="left:772px;top:539px" width="8" height="8"><path d="M2,3.5 L6,3.5 L4,5.5Z" fill="#555"/></svg>
<div class="a txt" style="left:740.5px;top:540px;font-size:5.6px;color:#333">171507648</div>
<svg class="a" style="left:787px;top:537px" width="9" height="12"><path d="M2.3,6 V4 Q2.3,1.3 4.5,1.3 Q6.7,1.3 6.7,4 V6" fill="none" stroke="#777" stroke-width="1.2"/><rect x="1" y="5.5" width="7" height="5" rx=".8" fill="#6e6e6e"/></svg>
<div class="a txt" style="left:799px;top:539.5px;font-size:7px;color:#333"><span class="j">拡大</span></div>
<div class="a" style="left:813.5px;top:537px;width:42.5px;height:11.5px;background:#fff;border:1px solid #d4d4d4;border-radius:1.5px"></div>
<div class="a txt" style="left:815px;top:540px;font-size:5.3px;color:#222">100%</div>
<svg class="a" style="left:849px;top:537px" width="7" height="12"><path d="M1.5,5 L3.5,2.5 L5.5,5Z M1.5,7 L3.5,9.5 L5.5,7Z" fill="#555"/></svg>
<div class="a txt" style="left:861px;top:539.5px;font-size:7px;color:#333"><span class="j">回転</span></div>
<div class="a" style="left:878px;top:537px;width:44px;height:11.5px;background:#fff;border:1px solid #d4d4d4;border-radius:1.5px"></div>
<div class="a txt" style="left:880.5px;top:540px;font-size:5.6px;color:#333">0.0 °</div>
<svg class="a" style="left:915px;top:537px" width="7" height="12"><path d="M1.5,5 L3.5,2.5 L5.5,5Z M1.5,7 L3.5,9.5 L5.5,7Z" fill="#555"/></svg>
<svg class="a" style="left:925.5px;top:538px" width="9" height="10"><rect x="0.5" y="1" width="7.5" height="7.5" fill="#fff" stroke="#888" stroke-width=".7"/><path d="M2,4.5 L3.8,6.8 L7,2" stroke="#111" stroke-width="1.1" fill="none"/></svg>
<div class="a txt" style="left:935.5px;top:539.5px;font-size:7px;color:#333"><span class="j">レンダ</span></div>
<svg class="a" style="left:956px;top:538px" width="9" height="10"><circle cx="4.3" cy="4.8" r="3.6" fill="#8a8a8a"/><path d="M1,3.5 H7.6 M0.8,5.5 H7.8 M1.5,7.3 H7" stroke="#c8c8c8" stroke-width=".5"/></svg>
<div class="a txt" style="left:965.5px;top:540px;font-size:5.6px;color:#333">ESRI:101595</div>
<svg class="a" style="left:1010px;top:537px" width="11" height="12"><ellipse cx="5.5" cy="5" rx="4.6" ry="3.8" fill="#555"/><path d="M6,8 L8.5,10.5 L8,7.5Z" fill="#555"/><circle cx="3.5" cy="5" r=".7" fill="#fff"/><circle cx="5.5" cy="5" r=".7" fill="#fff"/><circle cx="7.5" cy="5" r=".7" fill="#fff"/></svg>
<div id="rbar" class="a"></div>

</body></html>
